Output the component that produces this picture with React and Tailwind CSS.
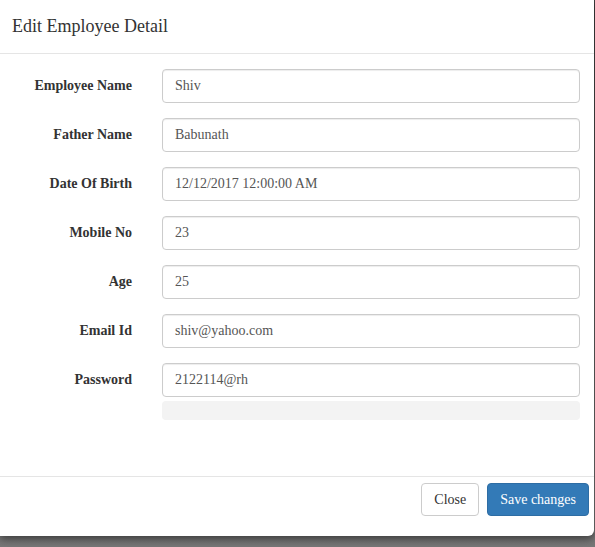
import React, { useState } from 'react';

const fields = [
  { name: 'name', label: 'Employee Name', value: 'Shiv' },
  { name: 'father', label: 'Father Name', value: 'Babunath' },
  { name: 'dob', label: 'Date Of Birth', value: '12/12/2017 12:00:00 AM' },
  { name: 'mobile', label: 'Mobile No', value: '23' },
  { name: 'age', label: 'Age', value: '25' },
  { name: 'email', label: 'Email Id', value: 'shiv@yahoo.com' },
  { name: 'password', label: 'Password', value: '2122114@rh' },
];

export default function App() {
  const [data, setData] = useState(
    Object.fromEntries(fields.map((f) => [f.name, f.value]))
  );

  const handleChange = (e) => {
    const { name, value } = e.target;
    setData({ ...data, [name]: value });
  };

  return (
    <div
      className="w-[595px] h-[547px] overflow-hidden bg-gradient-to-b from-[#3c3c3c] to-[#777777]"
      style={{ fontFamily: '"Liberation Serif", "Times New Roman", serif' }}
    >
      <div className="w-[594px] h-[536px] bg-white rounded-br-[6px] flex flex-col shadow-[0_3px_9px_rgba(0,0,0,0.5)]">
        <div className="h-[54px] border-b border-[#e5e5e5] px-[12px] pt-[14px]">
          <h4 className="text-[18px] leading-[24px] text-[#333]">Edit Employee Detail</h4>
        </div>

        <form className="flex flex-col gap-[15px] pt-[15px] h-[422px]">
          {fields.map((f) => (
            <div key={f.name} className="flex items-center">
              <label className="w-[132px] -mt-[2px] text-right text-[14px] font-bold text-[#333]">
                {f.label}
              </label>
              <input
                type="text"
                name={f.name}
                value={data[f.name]}
                onChange={handleChange}
                className="ml-[30px] w-[418px] h-[34px] border border-[#ccc] rounded-[4px] px-[12px] text-[14px] text-[#555] shadow-[inset_0_1px_1px_rgba(0,0,0,0.075)] focus:outline-none"
              />
            </div>
          ))}
          <div className="-mt-[11px] ml-[162px] w-[418px] h-[19px] bg-[#f3f3f3] rounded-[4px]"></div>
        </form>

        <div className="border-t border-[#e5e5e5] flex justify-end gap-[8px] pt-[6px] pr-[5px]">
          <button
            type="button"
            className="h-[33px] px-[12px] border border-[#ccc] rounded-[4px] bg-white text-[14px] text-[#333]"
          >
            Close
          </button>
          <button
            type="button"
            className="h-[33px] px-[12px] border border-[#2e6da4] rounded-[4px] bg-[#337ab7] text-[14px] text-white"
          >
            Save changes
          </button>
        </div>
      </div>
    </div>
  );
}
